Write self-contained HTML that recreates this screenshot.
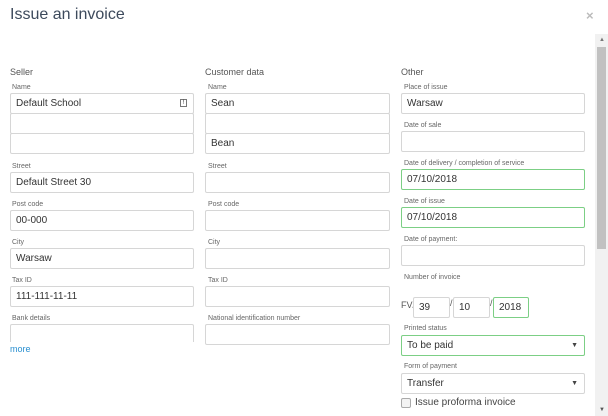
<!DOCTYPE html>
<html><head><style>
body{margin:0;width:608px;height:416px;overflow:hidden;background:#fff;font-family:"Liberation Sans",sans-serif;position:relative;color:#333}
.a{position:absolute}
.t{font-size:16px;color:#3d4a5c;left:10px;top:6px}
.h{font-size:9px;color:#555}
.l{font-size:7px;color:#666}
.i{position:absolute;border:1px solid #d6d6d6;border-radius:2px;box-sizing:border-box;height:21px;font-size:10px;line-height:19px;padding-left:5px;color:#333;background:#fff}
.g{border-color:#7ccf85}
.c1{left:10px;width:184px}.c2{left:205px;width:185px}.c3{left:401px;width:184px}
.ar{position:absolute;right:6px;top:0;font-size:7px;color:#444}
</style></head><body>
<div class="a t">Issue an invoice</div>
<div class="a" style="left:586px;top:8px;font-size:13px;color:#bbb;font-weight:bold">×</div>
<div class="a" style="left:595px;top:34px;width:13px;height:382px;background:#f1f1f1"></div>
<div class="a" style="left:597px;top:47px;width:9px;height:202px;background:#c1c1c1"></div>
<div class="a" style="left:599px;top:37px;font-size:6px;color:#777">▲</div>
<div class="a" style="left:599px;top:407px;font-size:6px;color:#555">▼</div>

<div class="a h" style="left:10px;top:67px">Seller</div>
<div class="a h" style="left:205px;top:67px">Customer data</div>
<div class="a h" style="left:401px;top:67px">Other</div>

<div class="a l" style="left:12px;top:84px">Name</div>
<div class="i c1" style="top:93px">Default School<span class="a" style="right:6px;top:5px;width:7px;height:8px;border:1px solid #777;box-sizing:border-box;font-size:6px;line-height:6px;text-align:center">!</span></div>
<div class="i c1" style="top:113px"></div>
<div class="i c1" style="top:133px"></div>
<div class="a l" style="left:12px;top:163px">Street</div>
<div class="i c1" style="top:172px">Default Street 30</div>
<div class="a l" style="left:12px;top:201px">Post code</div>
<div class="i c1" style="top:210px">00-000</div>
<div class="a l" style="left:12px;top:239px">City</div>
<div class="i c1" style="top:248px">Warsaw</div>
<div class="a l" style="left:12px;top:277px">Tax ID</div>
<div class="i c1" style="top:286px">111-111-11-11</div>
<div class="a l" style="left:12px;top:315px">Bank details</div>
<div class="a" style="left:10px;top:324px;width:184px;height:18px;overflow:hidden"><div class="i" style="left:0;top:0;width:184px"></div></div>
<div class="a" style="left:10px;top:344px;font-size:9px;color:#2a8fd0">more</div>

<div class="a l" style="left:208px;top:84px">Name</div>
<div class="i c2" style="top:93px">Sean</div>
<div class="i c2" style="top:113px"></div>
<div class="i c2" style="top:133px">Bean</div>
<div class="a l" style="left:208px;top:163px">Street</div>
<div class="i c2" style="top:172px"></div>
<div class="a l" style="left:208px;top:201px">Post code</div>
<div class="i c2" style="top:210px"></div>
<div class="a l" style="left:208px;top:239px">City</div>
<div class="i c2" style="top:248px"></div>
<div class="a l" style="left:208px;top:277px">Tax ID</div>
<div class="i c2" style="top:286px"></div>
<div class="a l" style="left:208px;top:315px">National identification number</div>
<div class="i c2" style="top:324px"></div>

<div class="a l" style="left:404px;top:84px">Place of issue</div>
<div class="i c3" style="top:93px">Warsaw</div>
<div class="a l" style="left:404px;top:122px">Date of sale</div>
<div class="i c3" style="top:131px"></div>
<div class="a l" style="left:404px;top:160px">Date of delivery / completion of service</div>
<div class="i c3 g" style="top:169px">07/10/2018</div>
<div class="a l" style="left:404px;top:198px">Date of issue</div>
<div class="i c3 g" style="top:207px">07/10/2018</div>
<div class="a l" style="left:404px;top:236px">Date of payment:</div>
<div class="i c3" style="top:245px"></div>
<div class="a l" style="left:404px;top:274px">Number of invoice</div>
<div class="a" style="left:401px;top:300px;font-size:9px;color:#555">FV/</div>
<div class="i" style="left:413px;top:297px;width:37px">39</div>
<div class="a" style="left:450px;top:298px;font-size:9px;color:#555">/</div>
<div class="i" style="left:453px;top:297px;width:37px">10</div>
<div class="a" style="left:490px;top:298px;font-size:9px;color:#555">/</div>
<div class="i g" style="left:493px;top:297px;width:36px">2018</div>
<div class="a l" style="left:404px;top:325px">Printed status</div>
<div class="i c3 g" style="top:335px">To be paid<span class="ar">▼</span></div>
<div class="a l" style="left:404px;top:363px">Form of payment</div>
<div class="i c3" style="top:373px">Transfer<span class="ar">▼</span></div>
<div class="a" style="left:401px;top:398px;width:8px;height:8px;border:1px solid #aaa;border-radius:2px;background:#f3f3f3"></div>
<div class="a" style="left:415px;top:397px;font-size:10px;color:#444">Issue proforma invoice</div>
</body></html>
